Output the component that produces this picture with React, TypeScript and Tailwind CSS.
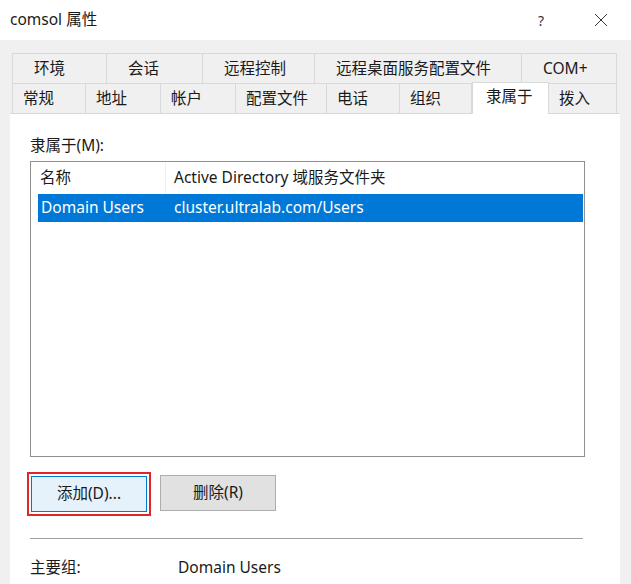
import React from "react";

const font = { fontFamily: '"Noto Sans", "Noto Sans CJK SC", sans-serif' };

const topTabs = [
  { label: "环境", w: "w-[95px]" },
  { label: "会话", w: "w-[96px]" },
  { label: "远程控制", w: "w-[112px]" },
  { label: "远程桌面服务配置文件", w: "w-[207px]" },
  { label: "COM+", w: "w-[95px]" },
];

const bottomTabs = [
  { label: "常规", w: "w-[74px]" },
  { label: "地址", w: "w-[75px]" },
  { label: "帐户", w: "w-[75px]" },
  { label: "配置文件", w: "w-[91px]" },
  { label: "电话", w: "w-[73px]" },
  { label: "组织", w: "w-[72px]" },
  { label: "隶属于", w: "w-[77px]", active: true },
  { label: "拨入", w: "w-[68px]" },
];

export default function App() {
  return (
    <div className="w-[631px] h-[584px] overflow-hidden bg-[#f0f0f0] text-[15.5px] text-[#1a1a1a]" style={font}>
      {/* title bar */}
      <div className="h-[40px] bg-white flex items-center pl-[10px]">
        <span className="flex-1">comsol 属性</span>
        <span className="w-[60px] text-center text-[14px] text-[#333]">?</span>
        <span className="w-[60px] flex justify-center">
          <svg width="14" height="14" viewBox="0 0 14 14">
            <path d="M1 1L13 13M13 1L1 13" stroke="#333" strokeWidth="1" />
          </svg>
        </span>
      </div>

      <div className="pt-[13px] pl-[12px]">
        <div className="flex h-[30px]">
          {topTabs.map((t) => (
            <div
              key={t.label}
              className={`${t.w} border-t border-r border-[#d9d9d9] first:border-l flex items-center pl-[21px] leading-none`}
            >
              {t.label}
            </div>
          ))}
        </div>
        <div className="flex h-[30px] items-end">
          {bottomTabs.map((t) =>
            t.active ? (
              <div
                key={t.label}
                className={`${t.w} h-[32px] -mt-[2px] bg-white border-t border-x border-[#d9d9d9] flex items-center pl-[13px] pb-[4px] leading-none relative z-10 -mb-px`}
              >
                {t.label}
              </div>
            ) : (
              <div
                key={t.label}
                className={`${t.w} h-[30px] border-t border-r border-[#d9d9d9] first:border-l flex items-center pl-[10px] leading-none`}
              >
                {t.label}
              </div>
            )
          )}
        </div>
      </div>

      {/* panel */}
      <div className="ml-[10px] w-[610px] h-[472px] bg-white border-t border-[#d9d9d9] pl-[20px] pr-[35px]">
        <div className="h-[48px] flex items-center pt-[16px] leading-none">隶属于(M):</div>

        <div className="h-[296px] border border-[#8f8f8f] pl-[7px] pr-px mt-[-1px]">
          <div className="h-[32px] flex items-center leading-none">
            <div className="w-[128px] pl-[2px] h-full flex items-center border-r border-[#f0f0f0]">名称</div>
            <div className="pl-[8px]">Active Directory 域服务文件夹</div>
          </div>
          <div className="h-[28px] bg-[#0078d7] text-white flex items-center leading-none">
            <div className="w-[128px] pl-[3px]">Domain Users</div>
            <div className="pl-[8px]">cluster.ultralab.com/Users</div>
          </div>
        </div>

        <div className="flex gap-[9px] mt-[15px] ml-[-3px]">
          <div className="border-2 border-[#e0262b] p-[2px]">
            <div className="w-[116px] h-[36px] bg-[#e5f1fb] border border-[#0078d7] flex items-center justify-center leading-none">
              添加(D)...
            </div>
          </div>
          <div className="mt-[3px] w-[116px] h-[36px] bg-[#e1e1e1] border border-[#adadad] flex items-center justify-center leading-none">
            删除(R)
          </div>
        </div>

        <div className="mt-[22px] border-t border-[#a0a0a0] w-[553px]" />

        <div className="flex items-center h-[58px] leading-none">
          <div className="w-[148px]">主要组:</div>
          <div>Domain Users</div>
        </div>
      </div>
    </div>
  );
}
